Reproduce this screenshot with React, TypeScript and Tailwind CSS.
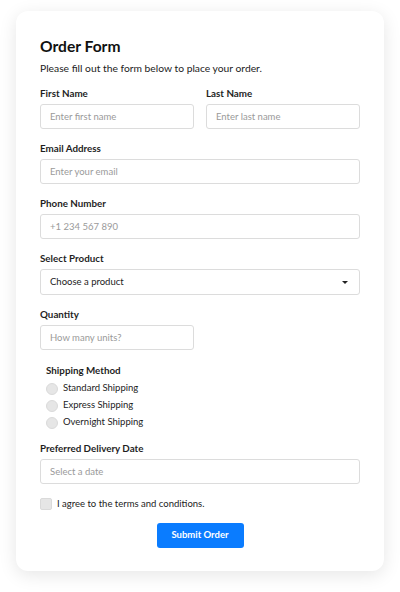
import React from 'react';

const font = { fontFamily: 'Lato, "Noto Sans", sans-serif' };

const inputCls =
  'block w-full h-[25px] rounded-[3px] border border-[#dcdcdc] bg-white px-[9px] text-[9.5px] text-[#333] placeholder:text-[#9a9a9a] outline-none';

const Label: React.FC<{ children: React.ReactNode }> = ({ children }) => (
  <label className="block mb-[2px] text-[9.8px] leading-[18px] font-bold text-[#1f1f1f]">{children}</label>
);

export default function App() {
  const shipping = ['Standard Shipping', 'Express Shipping', 'Overnight Shipping'];

  return (
    <div className="min-h-screen bg-white pt-[11px] px-[16px]" style={font}>
      <div className="rounded-[12px] bg-white px-[24px] pt-[24px] pb-[23px] shadow-[0_4px_18px_rgba(0,0,0,0.1)]">
        <h1 className="text-[15.6px] leading-[22px] font-bold text-[#111]">Order Form</h1>
        <p className="mt-[1px] text-[10.3px] leading-[20px] text-[#222]">Please fill out the form below to place your order.</p>

        <div className="mt-[6px] grid grid-cols-2 gap-x-[12px]">
          <div>
            <Label>First Name</Label>
            <input className={inputCls} placeholder="Enter first name" />
          </div>
          <div>
            <Label>Last Name</Label>
            <input className={inputCls} placeholder="Enter last name" />
          </div>
        </div>

        <div className="mt-[10px]">
          <Label>Email Address</Label>
          <input className={inputCls} placeholder="Enter your email" />
        </div>

        <div className="mt-[10px]">
          <Label>Phone Number</Label>
          <input className={inputCls} placeholder="+1 234 567 890" />
        </div>

        <div className="mt-[10px]">
          <Label>Select Product</Label>
          <div className="relative">
            <div className="flex h-[26px] w-full items-center rounded-[3px] border border-[#dcdcdc] bg-white px-[9px] text-[9.5px] text-[#222]">
              Choose a product
            </div>
            <span className="absolute right-[12px] top-[12px] h-0 w-0 border-x-[3.5px] border-t-[3.5px] border-x-transparent border-t-[#222]" />
          </div>
        </div>

        <div className="mt-[10px] w-[154px]">
          <Label>Quantity</Label>
          <input className={inputCls} placeholder="How many units?" />
        </div>

        <div className="mt-[11px] pl-[6px]">
          <div className="mb-[1px] text-[9.8px] leading-[18px] font-bold text-[#1f1f1f]">Shipping Method</div>
          {shipping.map(s => (
            <div key={s} className="flex h-[17px] items-center gap-[5px]">
              <span className="h-[12px] w-[12px] rounded-full border border-[#dadada] bg-[#e6e6e6]" />
              <span className="text-[9.5px] text-[#222]">{s}</span>
            </div>
          ))}
        </div>

        <div className="mt-[8px]">
          <Label>Preferred Delivery Date</Label>
          <input className={inputCls} placeholder="Select a date" />
        </div>

        <div className="mt-[11px] flex h-[18px] items-center gap-[5px]">
          <span className="h-[12px] w-[12px] rounded-[2px] border border-[#dadada] bg-[#e6e6e6]" />
          <span className="text-[9.5px] text-[#222]">I agree to the terms and conditions.</span>
        </div>

        <div className="mt-[10px] flex justify-center">
          <button className="h-[25px] w-[87px] rounded-[3px] bg-[#0a7cff] text-[9.5px] font-bold text-white">
            Submit Order
          </button>
        </div>
      </div>
    </div>
  );
}
